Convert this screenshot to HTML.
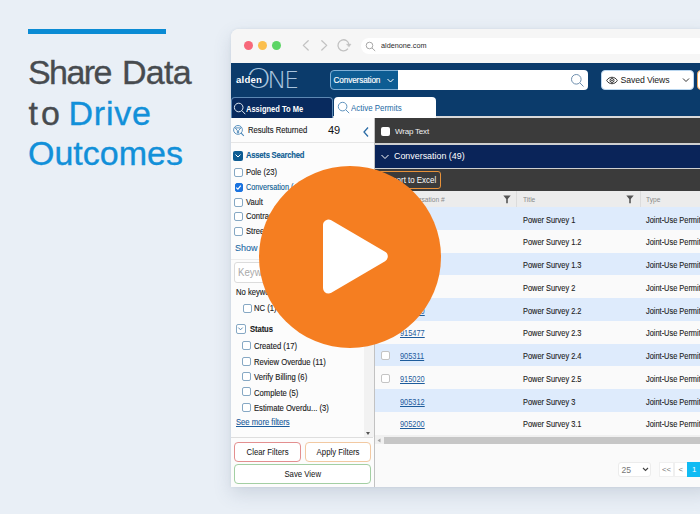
<!DOCTYPE html>
<html lang="en">
<head>
<meta charset="utf-8">
<title>Share Data to Drive Outcomes</title>
<style>
html,body{margin:0;padding:0;}
body{width:700px;height:514px;overflow:hidden;position:relative;background:#e9eff6;font-family:"Liberation Sans","DejaVu Sans",sans-serif;color:#222;}
.abs,.abs *{position:absolute;box-sizing:border-box;}
.t{white-space:nowrap;line-height:1;}
/* left headline */
#bar{left:28px;top:29px;width:138px;height:5px;background:#0b8bd4;}
.h{font-size:34px;color:#474b4f;-webkit-text-stroke:0.35px currentColor;}
.h b{font-weight:normal;color:#1290d9;position:static;}
/* window */
#win{left:231px;top:29px;width:480px;height:458.3px;background:#fafafa;border-radius:8px 0 0 0;box-shadow:0 7px 18px rgba(70,90,120,.17),0 0 3px rgba(70,90,120,.10);overflow:hidden;}
#chrome{left:0;top:0;width:480px;height:34px;background:#f6f6f6;}
.dot{width:9px;height:9px;border-radius:50%;top:11.6px;}
#url{left:130px;top:8.5px;width:360px;height:16.5px;border-radius:8.5px;background:#fff;}
#apphead{left:0;top:34px;width:480px;height:54px;background:#0b3b6b;}
#tabline{left:0;top:87px;width:480px;height:2px;background:#d9d9d9;}
#tab1{left:0px;top:68px;width:102px;height:21px;background:#082a5e;border:1px solid #5d88b3;border-bottom:none;border-radius:4px 4px 0 0;}
#tab2{left:103px;top:68px;width:102px;height:21px;background:#fff;border-radius:4px 4px 0 0;}
#sel{left:99px;top:7px;width:69px;height:20px;background:#0d5c93;border:1px solid #7fb0d6;border-radius:4px 0 0 4px;}
#sinput{left:167px;top:7px;width:190px;height:20px;background:#fff;border-radius:0 4px 4px 0;}
#saved{left:370px;top:7px;width:93px;height:19.6px;background:#fff;border-radius:4px;border:1px solid #b9d6ef;}
#btn3{left:466px;top:7px;width:30px;height:19.6px;background:#fff;border-radius:4px;border:1px solid #eda65a;}
/* sidebar */
#side{left:0;top:89px;width:143px;height:370px;background:#fcfcfc;}
#split{left:142.6px;top:89px;width:1.4px;height:370px;background:#c2c2c2;}
#strack{left:133px;top:100px;width:10px;height:219px;background:#f2f2f2;}
.lg{color:#a9c4dd;font-family:"DejaVu Sans Light","DejaVu Sans",sans-serif;font-weight:200;}
.abs .bs{position:static;display:inline-block;transform:scaleX(.93);}
.cb{width:9px;height:9px;border:1px solid #86a8c4;border-radius:2px;background:#fff;}
.st{font-size:8.2px;color:#1a1a1a;-webkit-text-stroke:0.12px currentColor;transform:scaleX(.935);transform-origin:0 50%;}
.btn{height:19px;border-radius:4px;background:#fff;font-size:8.4px;color:#111;text-align:center;line-height:18.4px;white-space:nowrap;}
/* main */
#main{left:144px;top:89px;width:340px;height:370px;background:#fafafa;}
.dark{left:0;width:340px;background:#3b3b3b;}
.row{left:0;width:340px;height:23px;}
.row.b{background:#deebfc;}
.row.w{background:#fafafa;}
.ct{font-size:8.6px;color:#1c1c1c;-webkit-text-stroke:0.12px #1c1c1c;transform:scaleX(.862);transform-origin:0 50%;}
.lk{font-size:8.6px;color:#1d5c9c;text-decoration:underline;text-underline-offset:1px;transform:scaleX(.862);transform-origin:0 50%;}
.rcb{left:6px;width:9px;height:9px;border:1px solid #c4c4c4;border-radius:2px;background:#fff;}
</style>
</head>
<body>
<div class="abs" id="bar"></div>
<div class="abs t h" style="top:55px;left:28px;letter-spacing:-1.6px;">Share</div>
<div class="abs t h" style="top:55px;left:122px;letter-spacing:-0.7px;">Data</div>
<div class="abs t h" style="top:96px;left:28.5px;letter-spacing:3px;">to</div>
<div class="abs t h" style="top:96px;left:68.5px;letter-spacing:0.75px;"><b>Drive</b></div>
<div class="abs t h" style="top:136px;left:28px;"><b>Outcomes</b></div>

<div class="abs" id="win">
  <div id="chrome">
    <div class="dot" style="left:13px;background:#f7687a;"></div>
    <div class="dot" style="left:27px;background:#fbbf4e;"></div>
    <div class="dot" style="left:41px;background:#5dd566;"></div>
    <svg style="left:68px;top:9px;" width="60" height="16" viewBox="0 0 60 16" fill="none" stroke="#c2c2c2" stroke-width="1.3" stroke-linecap="round" stroke-linejoin="round">
      <path d="M9.2 2.8 L4.3 7.4 L9.2 12"/>
      <path d="M22.8 2.8 L27.7 7.4 L22.8 12"/>
      <path d="M48.59 10.98 A5.5 5.5 0 1 1 50.00 7.00"/>
      <path d="M47.70 6.10 L52.10 6.10 L50.00 8.90 Z" fill="#c2c2c2" stroke-width="0.4"/>
    </svg>
    <div id="url">
      <svg style="left:4.4px;top:3px;" width="12" height="12" viewBox="0 0 12 12" fill="none" stroke="#a8a8a8" stroke-width="1"><circle cx="4.5" cy="4.5" r="3.3"/><path d="M7 7 L10.2 10"/></svg>
      <div class="t" style="left:20.3px;top:4.4px;font-size:7.8px;color:#2a2a2a;transform:scaleX(.93);transform-origin:0 50%;">aldenone.com</div>
    </div>
  </div>
  <div id="apphead">
    <div class="t lg" style="left:15.2px;top:3.2px;font-size:26.6px;transform:scaleX(1.2);transform-origin:0 0;">O</div>
    <div class="t lg" style="left:36.2px;top:6px;font-size:23.5px;transform:scaleX(1.13);transform-origin:0 0;">N</div>
    <div class="t lg" style="left:53.3px;top:6px;font-size:23.5px;">E</div>
    <div class="t" style="left:4px;top:11.5px;font-size:9.6px;font-weight:bold;color:#fff;letter-spacing:0.2px;background:#0b3b6b;padding:0 1px;">alden</div>
    <div id="sel"><div class="t" style="left:2.5px;top:5.5px;font-size:8.2px;color:#fff;letter-spacing:-0.12px;-webkit-text-stroke:0.15px #fff;">Conversation</div>
      <svg style="left:55px;top:6px;" width="9" height="7" viewBox="0 0 9 7" fill="none" stroke="#fff" stroke-width="1"><path d="M1.5 2 L4.5 5 L7.5 2"/></svg>
    </div>
    <div id="sinput">
      <svg style="left:172px;top:3px;" width="15" height="15" viewBox="0 0 15 15" fill="none" stroke="#6f8fae" stroke-width="1"><circle cx="6.3" cy="6.3" r="4.8"/><path d="M10 10 L13.5 13.5"/></svg>
    </div>
    <div id="saved">
      <svg style="left:3.5px;top:3.5px;" width="12" height="11" viewBox="0 0 12 11" fill="none" stroke="#222" stroke-width="0.9"><path d="M0.7 5.5 C3 1.2 9 1.2 11.3 5.5 C9 9.8 3 9.8 0.7 5.5 Z"/><circle cx="6" cy="5.5" r="2"/><circle cx="6" cy="5.5" r="0.8" fill="#222" stroke="none"/></svg>
      <div class="t" style="left:18.5px;top:4.5px;font-size:8.7px;color:#1a1a1a;letter-spacing:-0.1px;">Saved Views</div>
      <svg style="left:80px;top:6px;" width="8" height="6" viewBox="0 0 8 6" fill="none" stroke="#333" stroke-width="1"><path d="M1 1.5 L4 4.5 L7 1.5"/></svg>
    </div>
    <div id="btn3"></div>
  </div>
  <div id="tabline"></div>
  <div id="tab1">
    <svg style="left:1px;top:4px;" width="14" height="14" viewBox="0 0 14 14" fill="none" stroke="#dfe8f2" stroke-width="1"><circle cx="5.7" cy="5.5" r="4.3"/><path d="M8.9 8.7 L12.3 12.2"/></svg>
    <div class="t" style="left:14px;top:6.6px;font-size:8.5px;color:#fff;font-weight:bold;transform:scaleX(.885);transform-origin:0 50%;">Assigned To Me</div>
  </div>
  <div id="tab2">
    <svg style="left:3px;top:4px;" width="14" height="14" viewBox="0 0 14 14" fill="none" stroke="#5f93be" stroke-width="1"><circle cx="5.6" cy="5.6" r="4.3"/><path d="M8.8 8.8 L12.2 12.2"/></svg>
    <div class="t" style="left:16.5px;top:6.6px;font-size:8.8px;color:#1d6aa5;transform:scaleX(.9);transform-origin:0 50%;">Active Permits</div>
  </div>

  <div id="side">
    <div id="strack"></div>
    <svg style="left:1px;top:6px;" width="14" height="14" viewBox="0 0 14 14" fill="none" stroke="#4a86b8" stroke-width="0.9"><circle cx="6" cy="5.9" r="4.4"/><path d="M3.2 3.9 L8.8 3.9 L6.6 6.6 L6.6 8.9 L5.4 8.9 L5.4 6.6 Z"/><path d="M9.2 9.2 L11.8 11.8" stroke-width="1.1"/></svg>
    <div class="t st" style="left:17px;top:9px;">Results Returned</div>
    <div class="t" style="left:97px;top:7px;font-size:11px;color:#111;">49</div>
    <svg style="left:131px;top:7.5px;" width="8" height="12" viewBox="0 0 8 12" fill="none" stroke="#2b6ca6" stroke-width="1.3"><path d="M6 1.5 L2 6 L6 10.5"/></svg>
    <div style="left:0;top:24.4px;width:143px;height:1px;background:#e6e6e6;"></div>

    <div style="left:2.4px;top:32.6px;width:10px;height:10px;background:#0d5c93;border-radius:2px;">
      <svg style="left:1px;top:2px;" width="8" height="6" viewBox="0 0 8 6" fill="none" stroke="#fff" stroke-width="1"><path d="M1.5 1.5 L4 4 L6.5 1.5"/></svg>
    </div>
    <div class="t st" style="left:15px;top:34px;color:#0d5c93;font-weight:bold;letter-spacing:-0.25px;">Assets Searched</div>

    <div class="cb" style="left:3px;top:50px;"></div>
    <div class="t st" style="left:15px;top:51px;">Pole (23)</div>
    <div class="cb" style="left:3.6px;top:65.3px;width:8.4px;height:8.4px;background:#1a73e0;border-color:#1a73e0;">
      <svg style="left:-0.3px;top:-0.3px;" width="7" height="7" viewBox="0 0 7 7" fill="none" stroke="#fff" stroke-width="1.2"><path d="M1.2 3.6 L2.9 5.2 L5.8 1.6"/></svg>
    </div>
    <div class="t st" style="left:15.4px;top:66px;color:#0d5c93;transform:scaleX(.89);">Conversation (49)</div>
    <div class="cb" style="left:3px;top:79.5px;"></div>
    <div class="t st" style="left:15px;top:81px;">Vault</div>
    <div class="cb" style="left:3px;top:94px;"></div>
    <div class="t st" style="left:15px;top:95px;">Contract</div>
    <div class="cb" style="left:3px;top:109px;"></div>
    <div class="t st" style="left:15px;top:110px;">Street Light</div>
    <div class="t st" style="left:3.5px;top:125px;color:#1d6aa5;font-size:9.6px;">Show More</div>
    <div style="left:0;top:141px;width:132px;height:1px;background:#ececec;"></div>

    <div style="left:3px;top:144px;width:126px;height:21px;border:1px solid #dcdcdc;border-radius:3px;background:#fff;"></div>
    <div class="t" style="left:6.5px;top:149.5px;font-size:10.4px;color:#a9a9a9;transform:scaleX(.93);transform-origin:0 50%;">Keywords</div>
    <div class="t st" style="left:5px;top:170.7px;">No keywords entered</div>

    <div class="cb" style="left:12px;top:186px;"></div>
    <div class="t st" style="left:23px;top:187px;">NC (1)</div>

    <div class="cb" style="left:4.5px;top:205.5px;width:10.5px;height:10.5px;border-radius:2px;">
      <svg style="left:0.7px;top:1.5px;" width="7" height="6" viewBox="0 0 7 6" fill="none" stroke="#4a7ba5" stroke-width="0.9"><path d="M1.3 1.6 L3.5 3.8 L5.7 1.6"/></svg>
    </div>
    <div class="t st" style="left:18.5px;top:208px;font-weight:bold;letter-spacing:-0.1px;">Status</div>

    <div class="cb" style="left:11.4px;top:223.3px;"></div>
    <div class="t st" style="left:23px;top:225px;">Created (17)</div>
    <div class="cb" style="left:11.4px;top:238.7px;"></div>
    <div class="t st" style="left:23px;top:240.5px;">Review Overdue (11)</div>
    <div class="cb" style="left:11.4px;top:254px;"></div>
    <div class="t st" style="left:23px;top:256px;">Verify Billing (6)</div>
    <div class="cb" style="left:11.4px;top:269.4px;"></div>
    <div class="t st" style="left:23px;top:271.5px;">Complete (5)</div>
    <div class="cb" style="left:11.4px;top:284.7px;"></div>
    <div class="t st" style="left:23px;top:287px;">Estimate Overdu... (3)</div>
    <div class="t st" style="left:5px;top:300.7px;color:#1d5c9c;text-decoration:underline;">See more filters</div>

    <svg style="left:134px;top:313px;" width="6" height="5" viewBox="0 0 6 5"><path d="M1 1 L5 1 L3 4 Z" fill="#555"/></svg>
    <div style="left:0;top:319px;width:142px;height:1px;background:#dedede;"></div>
    <div class="btn" style="left:3.4px;top:324.4px;width:66.5px;height:19.4px;border:1px solid #e38f8f;"><span class="bs">Clear Filters</span></div>
    <div class="btn" style="left:74px;top:324.4px;width:66px;height:19.4px;border:1px solid #f2c9a2;"><span class="bs">Apply Filters</span></div>
    <div class="btn" style="left:3.4px;top:346.3px;width:136.6px;height:19.6px;border:1px solid #a3cfa3;"><span class="bs">Save View</span></div>
  </div>
  <div id="split"></div>

  <div id="main">
    <div class="dark" style="top:0;height:25px;">
      <div style="left:6px;top:9px;width:9px;height:9px;background:#fff;border-radius:2px;"></div>
      <div class="t" style="left:20px;top:9.5px;font-size:8px;color:#f2f2f2;letter-spacing:-0.2px;">Wrap Text</div>
    </div>
    <div style="left:0;top:25px;width:340px;height:2px;background:#cfcfcf;"></div>
    <div style="left:0;top:26.5px;width:340px;height:23px;background:#0a2459;">
      <svg style="left:5px;top:8px;" width="10" height="8" viewBox="0 0 10 8" fill="none" stroke="#fff" stroke-width="1"><path d="M1.5 2 L5 5.5 L8.5 2"/></svg>
      <div class="t" style="left:19px;top:6.5px;font-size:9.9px;color:#fff;transform:scaleX(.9);transform-origin:0 50%;">Conversation (49)</div>
    </div>
    <div style="left:0;top:49.5px;width:340px;height:2px;background:#cfcfcf;"></div>
    <div class="dark" style="top:51px;height:22px;">
      <div style="left:3px;top:2px;width:63px;height:18px;border:1px solid #e8923a;border-radius:3px;"></div>
      <div class="t" style="left:8px;top:7px;font-size:8.7px;color:#fff;transform:scaleX(.91);transform-origin:0 50%;">Export to Excel</div>
    </div>
    <div style="left:0;top:73px;width:340px;height:16px;background:#ececec;">
      <div class="t" style="left:25px;top:5px;font-size:7.4px;color:#8a8a8a;transform:scaleX(.9);transform-origin:0 50%;">Conversation #</div>
      <div class="t" style="left:148px;top:5px;font-size:7.4px;color:#8a8a8a;transform:scaleX(.9);transform-origin:0 50%;">Title</div>
      <div class="t" style="left:271px;top:5px;font-size:7.4px;color:#8a8a8a;transform:scaleX(.9);transform-origin:0 50%;">Type</div>
      <div style="left:141px;top:0;width:1px;height:16px;background:#dcdcdc;"></div>
      <div style="left:265px;top:0;width:1px;height:16px;background:#dcdcdc;"></div>
      <svg style="left:128px;top:4px;" width="8" height="9" viewBox="0 0 8 9"><path d="M0.3 0.5 L7.7 0.5 L4.8 4 L4.8 8.2 L3.2 8.2 L3.2 4 Z" fill="#555"/></svg>
      <svg style="left:251px;top:4px;" width="8" height="9" viewBox="0 0 8 9"><path d="M0.3 0.5 L7.7 0.5 L4.8 4 L4.8 8.2 L3.2 8.2 L3.2 4 Z" fill="#555"/></svg>
    </div>

    <div class="row b" style="top:89px;"><div class="rcb" style="top:7.5px;"></div><div class="t lk" style="left:25px;top:8.5px;">915473</div><div class="t ct" style="left:148px;top:8.5px;">Power Survey 1</div><div class="t ct" style="left:271px;top:8.5px;">Joint-Use Permit</div></div>
    <div class="row w" style="top:111.75px;"><div class="rcb" style="top:7.5px;"></div><div class="t lk" style="left:25px;top:8.5px;">915474</div><div class="t ct" style="left:148px;top:8.5px;">Power Survey 1.2</div><div class="t ct" style="left:271px;top:8.5px;">Joint-Use Permit</div></div>
    <div class="row b" style="top:134.5px;"><div class="rcb" style="top:7.5px;"></div><div class="t lk" style="left:25px;top:8.5px;">915475</div><div class="t ct" style="left:148px;top:8.5px;">Power Survey 1.3</div><div class="t ct" style="left:271px;top:8.5px;">Joint-Use Permit</div></div>
    <div class="row w" style="top:157.25px;"><div class="rcb" style="top:7.5px;"></div><div class="t lk" style="left:25px;top:8.5px;">915476</div><div class="t ct" style="left:148px;top:8.5px;">Power Survey 2</div><div class="t ct" style="left:271px;top:8.5px;">Joint-Use Permit</div></div>
    <div class="row b" style="top:180px;"><div class="rcb" style="top:7.5px;"></div><div class="t lk" style="left:25px;top:8.5px;">905310</div><div class="t ct" style="left:148px;top:8.5px;">Power Survey 2.2</div><div class="t ct" style="left:271px;top:8.5px;">Joint-Use Permit</div></div>
    <div class="row w" style="top:202.75px;"><div class="rcb" style="top:7.5px;"></div><div class="t lk" style="left:25px;top:8.5px;">915477</div><div class="t ct" style="left:148px;top:8.5px;">Power Survey 2.3</div><div class="t ct" style="left:271px;top:8.5px;">Joint-Use Permit</div></div>
    <div class="row b" style="top:225.5px;"><div class="rcb" style="top:7.5px;"></div><div class="t lk" style="left:25px;top:8.5px;">905311</div><div class="t ct" style="left:148px;top:8.5px;">Power Survey 2.4</div><div class="t ct" style="left:271px;top:8.5px;">Joint-Use Permit</div></div>
    <div class="row w" style="top:248.25px;"><div class="rcb" style="top:7.5px;"></div><div class="t lk" style="left:25px;top:8.5px;">915020</div><div class="t ct" style="left:148px;top:8.5px;">Power Survey 2.5</div><div class="t ct" style="left:271px;top:8.5px;">Joint-Use Permit</div></div>
    <div class="row b" style="top:271px;"><div class="t lk" style="left:25px;top:8.5px;">905312</div><div class="t ct" style="left:148px;top:8.5px;">Power Survey 3</div><div class="t ct" style="left:271px;top:8.5px;">Joint-Use Permit</div></div>
    <div class="row w" style="top:293.75px;"><div class="t lk" style="left:25px;top:8.5px;">905200</div><div class="t ct" style="left:148px;top:8.5px;">Power Survey 3.1</div><div class="t ct" style="left:271px;top:8.5px;">Joint-Use Permit</div></div>

    <div style="left:0;top:317px;width:340px;height:9px;background:#f0f0f0;"></div>
    <div style="left:9px;top:319px;width:331px;height:6.6px;background:#c6c6c6;"></div>
    <svg style="left:2px;top:320px;" width="4" height="5" viewBox="0 0 4 5"><path d="M3.5 0.5 L0.5 2.5 L3.5 4.5 Z" fill="#a5a5a5"/></svg>
    <div style="left:0;top:326px;width:340px;height:44px;background:#fafafa;"></div>
    <div style="left:243px;top:344.3px;width:33px;height:14.5px;background:#fff;border:1px solid #ececec;border-radius:3px;">
      <div class="t" style="left:2.6px;top:2.6px;font-size:8.6px;color:#777;">25</div>
      <svg style="left:23px;top:4px;" width="7" height="5" viewBox="0 0 7 5" fill="none" stroke="#444" stroke-width="1.1"><path d="M1 1 L3.5 3.5 L6 1"/></svg>
    </div>
    <div style="left:283.5px;top:344.3px;width:15px;height:14.5px;background:#fff;border:1px solid #f0f0f0;"><div class="t" style="left:2.5px;top:2.6px;font-size:7.8px;color:#777;">&lt;&lt;</div></div>
    <div style="left:298.5px;top:344.3px;width:14px;height:14.5px;background:#fff;border:1px solid #f0f0f0;"><div class="t" style="left:4px;top:2.6px;font-size:7.8px;color:#777;">&lt;</div></div>
    <div style="left:312.4px;top:344.3px;width:14px;height:14.5px;background:#10bbf3;"><div class="t" style="left:4.6px;top:3.6px;font-size:7.8px;color:#fff;">1</div></div>
  </div>
</div>

<!-- play button -->
<svg class="abs" style="left:259px;top:166px;" width="182" height="182" viewBox="0 0 182 182">
  <circle cx="91" cy="91" r="91" fill="#f57e21"/>
  <path d="M69.5 59 L69.5 122 L123.3 90.4 Z" fill="#fff" stroke="#fff" stroke-width="11" stroke-linejoin="round"/>
</svg>
</body>
</html>
